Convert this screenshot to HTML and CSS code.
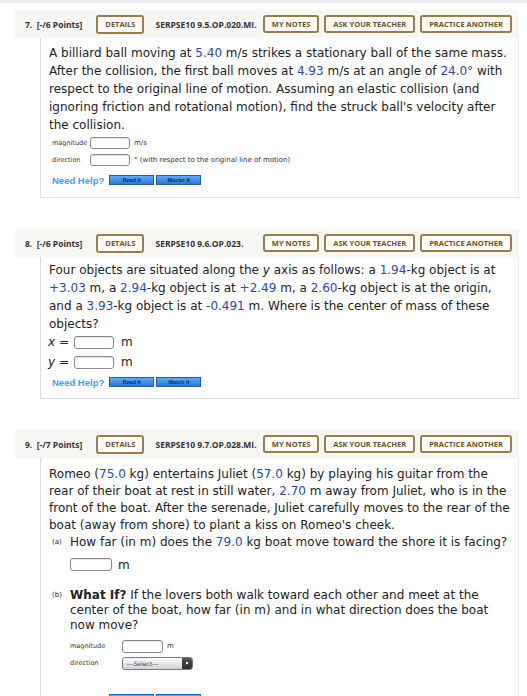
FILE: index.html
```html
<!DOCTYPE html>
<html>
<head>
<meta charset="utf-8">
<link rel="stylesheet" href="styles.css">
</head>
<body>
<div class="topstrip"></div>

<section class="q q7">
  <div class="qhead">
    <span class="pts">7.&nbsp; [-/6 Points]</span>
    <span class="btn details">DETAILS</span>
    <span class="code">SERPSE10 9.5.OP.020.MI.</span>
    <div class="actions">
      <span class="btn">MY NOTES</span>
      <span class="btn">ASK YOUR TEACHER</span>
      <span class="btn">PRACTICE ANOTHER</span>
    </div>
  </div>
  <div class="qbody b7">
    <p class="text">A billiard ball moving at <span class="num">5.40</span> m/s strikes a stationary ball of the same mass. After the collision, the first ball moves at <span class="num">4.93</span> m/s at an angle of <span class="num">24.0°</span> with respect to the original line of motion. Assuming an elastic collision (and ignoring friction and rotational motion), find the struck ball's velocity after the collision.</p>
    <div class="srow r7a"><span class="slbl">magnitude</span><span class="box"></span><span class="sunit">m/s</span></div>
    <div class="srow r7b"><span class="slbl">direction</span><span class="box"></span><span class="sunit">° (with respect to the original line of motion)</span></div>
    <div class="help h7"><span class="need">Need Help?</span><span class="hbtn">Read It</span><span class="hbtn">Master It</span></div>
  </div>
</section>

<section class="q q8">
  <div class="qhead">
    <span class="pts">8.&nbsp; [-/6 Points]</span>
    <span class="btn details">DETAILS</span>
    <span class="code">SERPSE10 9.6.OP.023.</span>
    <div class="actions">
      <span class="btn">MY NOTES</span>
      <span class="btn">ASK YOUR TEACHER</span>
      <span class="btn">PRACTICE ANOTHER</span>
    </div>
  </div>
  <div class="qbody b8">
    <p class="text">Four objects are situated along the <i>y</i> axis as follows: a <span class="num">1.94</span>-kg object is at <span class="num">+3.03</span> m, a <span class="num">2.94</span>-kg object is at <span class="num">+2.49</span> m, a <span class="num">2.60</span>-kg object is at the origin, and a <span class="num">3.93</span>-kg object is at <span class="num">-0.491</span> m. Where is the center of mass of these objects?</p>
    <div class="xrow r8a"><span class="xlbl"><i>x</i> =</span><span class="box bx8"></span><span class="xunit">m</span></div>
    <div class="xrow r8b"><span class="xlbl"><i>y</i> =</span><span class="box bx8"></span><span class="xunit">m</span></div>
    <div class="help h8"><span class="need">Need Help?</span><span class="hbtn">Read It</span><span class="hbtn">Watch It</span></div>
  </div>
</section>

<section class="q q9">
  <div class="qhead">
    <span class="pts">9.&nbsp; [-/7 Points]</span>
    <span class="btn details">DETAILS</span>
    <span class="code">SERPSE10 9.7.OP.028.MI.</span>
    <div class="actions">
      <span class="btn">MY NOTES</span>
      <span class="btn">ASK YOUR TEACHER</span>
      <span class="btn">PRACTICE ANOTHER</span>
    </div>
  </div>
  <div class="qbody b9">
    <p class="text t9">Romeo (<span class="num">75.0</span> kg) entertains Juliet (<span class="num">57.0</span> kg) by playing his guitar from the rear of their boat at rest in still water, <span class="num">2.70</span> m away from Juliet, who is in the front of the boat. After the serenade, Juliet carefully moves to the rear of the boat (away from shore) to plant a kiss on Romeo's cheek.</p>
    <div class="part pa">
      <span class="plbl">(a)</span>
      <p class="ptext">How far (in m) does the <span class="num">79.0</span> kg boat move toward the shore it is facing?</p>
    </div>
    <div class="arow"><span class="box bx9"></span><span class="xunit">m</span></div>
    <div class="part pb">
      <span class="plbl">(b)</span>
      <p class="ptext"><b>What If?</b> If the lovers both walk toward each other and meet at the center of the boat, how far (in m) and in what direction does the boat now move?</p>
    </div>
    <div class="srow r9a"><span class="slbl wide">magnitude</span><span class="box bx9b"></span><span class="sunit">m</span></div>
    <div class="srow r9b"><span class="slbl wide">direction</span><span class="select"><span class="seltext">---Select---</span><span class="selbtn"><span class="seldot"></span></span></span></div>
    <div class="help h9"><span class="need">Need Help?</span><span class="hbtn">Read It</span><span class="hbtn">Master It</span></div>
  </div>
</section>
</body>
</html>
```

FILE: styles.css
```css
html, body {
  margin: 0;
  padding: 0;
  background: #ffffff;
}

body {
  font-family: "DejaVu Sans", Verdana, sans-serif;
  color: #222222;
  width: 527px;
  height: 696px;
  overflow: hidden;
}

.topstrip {
  height: 3px;
  background: #ececec;
}

.q {
  margin-left: 15px;
  width: 504px;
}

.q7 { margin-top: 7px; }
.q8 { margin-top: 31px; }
.q9 { margin-top: 31px; }

.qhead {
  height: 28px;
  box-sizing: border-box;
  background: #f6f6f3;
  display: flex;
  align-items: center;
  padding: 0 7px 0 10px;
  font-family: "Open Sans", "DejaVu Sans", sans-serif;
  font-weight: 700;
  font-size: 8.5px;
  color: #333333;
}

.pts {
  margin-right: 14px;
  white-space: nowrap;
}

.code {
  margin-left: 11px;
  white-space: nowrap;
}

.btn {
  display: inline-flex;
  align-items: center;
  height: 18px;
  box-sizing: border-box;
  padding: 0 7px;
  border: 2px solid #9a7d4c;
  border-radius: 3px;
  background: #fffdf6;
  color: #6c5226;
  font-family: "Open Sans", "DejaVu Sans", sans-serif;
  font-size: 7.5px;
  font-weight: 700;
  white-space: nowrap;
}

.details {
  height: 19px;
}

.actions {
  margin-left: auto;
  display: flex;
  gap: 5px;
}

.qbody {
  margin-left: 25px;
  border-left: 1px solid #dcdcdc;
  border-right: 1px solid #ececec;
  border-bottom: 1px solid #dcdcdc;
  padding: 4px 4px 10px 8px;
}

.b7 { padding-top: 6px; padding-bottom: 10px; }
.b8 { padding-top: 4px; padding-bottom: 9px; }
.b9 { padding-top: 8px; padding-bottom: 20px; border-bottom: none; }

.text {
  margin: 0;
  font-size: 12px;
  line-height: 18px;
}

.t9 { line-height: 17px; }

.num { color: #2f47a8; }

.srow {
  display: flex;
  align-items: center;
  height: 16px;
  font-size: 6.5px;
  color: #333333;
}

.r7a { margin-top: 1px; }
.r7b { margin-top: 1px; }

.slbl {
  width: 38px;
  margin-left: 3px;
}

.slbl.wide {
  width: 52px;
  margin-left: 21px;
}

.sunit {
  margin-left: 4px;
  font-size: 7px;
}

.box {
  display: inline-block;
  width: 40px;
  height: 12px;
  box-sizing: border-box;
  border: 1px solid #8c8c8c;
  border-radius: 3px;
  background: #ffffff;
  box-shadow: inset 0 1px 1px rgba(0, 0, 0, 0.12);
}

.bx8 { height: 13px; }
.bx9 { width: 42px; height: 13px; }
.bx9b { width: 41px; height: 13px; }

.help {
  display: flex;
  align-items: center;
  height: 14px;
  margin-top: 5px;
  margin-left: 3px;
}

.need {
  font-family: "Liberation Sans", Arial, sans-serif;
  font-weight: 700;
  font-size: 9.5px;
  color: #45a0e0;
  margin-right: 5px;
}

.hbtn {
  display: flex;
  align-items: center;
  justify-content: center;
  width: 45px;
  height: 10px;
  box-sizing: border-box;
  margin-right: 2px;
  background: linear-gradient(#63aaf0, #2c78d4);
  border: 1px solid #1d5eb0;
  font-family: "Liberation Sans", Arial, sans-serif;
  font-weight: 700;
  font-size: 5.5px;
  color: #0d2a6e;
}

.xrow {
  display: flex;
  align-items: center;
  height: 16px;
  font-size: 12px;
}

.r8a { margin-top: 1px; }
.r8b { margin-top: 4px; }

.xlbl {
  width: 26px;
  margin-left: -1px;
}

.xunit {
  margin-left: 7px;
  font-size: 12px;
}

.part {
  display: flex;
  align-items: flex-start;
}

.plbl {
  width: 18px;
  margin-left: 3px;
  font-size: 7px;
}

.ptext {
  margin: 0;
  flex: 1;
  font-size: 12px;
}

.pa { margin-top: 1px; }
.pa .plbl, .pa .ptext { line-height: 15px; }

.pb { margin-top: 17px; }
.pb .plbl, .pb .ptext { line-height: 15px; }

.arow {
  display: flex;
  align-items: center;
  height: 13px;
  margin-top: 8px;
  margin-left: 21px;
}

.arow .xunit { margin-left: 6px; }

.r9a { margin-top: 6px; height: 14px; }
.r9b { margin-top: 3px; height: 14px; }

.select {
  display: flex;
  align-items: center;
  width: 71px;
  height: 13px;
  box-sizing: border-box;
  border: 1px solid #7a7a7a;
  border-radius: 3px;
  background: linear-gradient(#fbfbfb, #d2d2d2);
  overflow: hidden;
}

.seltext {
  padding-left: 4px;
  font-size: 6px;
  color: #444444;
}

.selbtn {
  margin-left: auto;
  width: 10px;
  height: 100%;
  background: linear-gradient(#555555, #2c2c2c);
  display: flex;
  align-items: center;
  justify-content: center;
}

.seldot {
  width: 2px;
  height: 2px;
  background: #ffffff;
}

.h9 { margin-top: 22px; }
```
